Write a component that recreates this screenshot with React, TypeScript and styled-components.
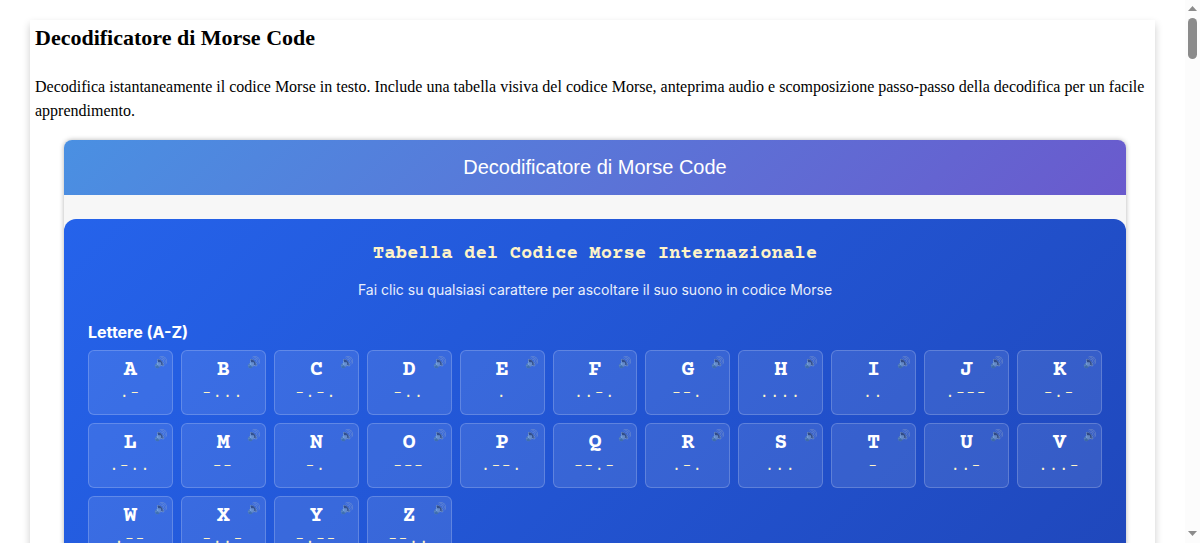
import React from 'react';
import styled, { createGlobalStyle } from 'styled-components';

const GlobalStyle = createGlobalStyle`
  *, *::before, *::after { box-sizing: border-box; }
  body {
    margin: 0;
    background: #fff;
    color: #000;
    font-family: "Liberation Serif", "Times New Roman", serif;
    font-size: 16px;
    line-height: 24px;
  }
  h1, h2, h3, p { margin: 0; }
`;

const Viewport = styled.div`
  display: flex;
  height: 100vh;
  overflow: hidden;
`;

const Page = styled.div`
  flex: 1;
  min-width: 0;
  padding: 20px 30px;
  overflow: hidden;
`;

const Article = styled.main`
  padding: 5px 0 24px 5px;
  background: #fff;
  box-shadow: 0 4px 8px rgba(0, 0, 0, 0.2);
`;

const PageTitle = styled.h1`
  font-size: 22px;
  line-height: 26px;
  margin-bottom: 24px;
`;

const Intro = styled.p`
  margin-bottom: 17px;
`;

const Tool = styled.section`
  margin: 0 29px;
  border-radius: 8px;
  background: #f7f7f7;
  box-shadow: 0 0 5px rgba(0, 0, 0, 0.3);
`;

const ToolHeader = styled.h2`
  padding: 15px;
  margin-bottom: 24px;
  border-radius: 8px 8px 0 0;
  background: linear-gradient(135deg, #4a90e2, #6a5acd);
  color: #fff;
  font: 400 20px/25px "Liberation Sans", Arial, sans-serif;
  text-align: center;
`;

const Chart = styled.div`
  min-height: 720px;
  padding: 24px;
  border-radius: 12px;
  background: linear-gradient(135deg, #2563eb 0%, #1e40af 100%);
  color: #fff;
  font-family: Inter, sans-serif;
`;

const ChartTitle = styled.h2`
  margin-bottom: 15px;
  color: #fef3c7;
  font: 700 19px/22px "Courier Prime", Courier, "Liberation Mono", monospace;
  text-align: center;
`;

const Hint = styled.p`
  margin-bottom: 20px;
  font-size: 14px;
  line-height: 20px;
  text-align: center;
  opacity: 0.9;
`;

const GroupTitle = styled.h3`
  margin-bottom: 6px;
  font-size: 16px;
  font-weight: 700;
  line-height: 24px;
`;

const Grid = styled.div`
  display: grid;
  grid-template-columns: repeat(auto-fill, minmax(80px, 1fr));
  gap: 8px;
`;

const Key = styled.button`
  position: relative;
  display: flex;
  flex-direction: column;
  align-items: center;
  height: 65px;
  padding: 8px;
  border: 1px solid rgba(255, 255, 255, 0.2);
  border-radius: 6px;
  background: rgba(255, 255, 255, 0.1);
  color: #fff;
  font-family: "Courier Prime", Courier, "Liberation Mono", monospace;
  cursor: pointer;
`;

const Letter = styled.span`
  font-size: 22px;
  font-weight: 700;
  line-height: 24px;
  margin-bottom: 3px;
`;

const Code = styled.span`
  color: #fef3c7;
  font-size: 14px;
  line-height: 16px;
  letter-spacing: 2px;
`;

const Speaker = styled.span`
  position: absolute;
  top: 4px;
  right: 4px;
  font-family: "Noto Color Emoji", sans-serif;
  font-size: 11px;
  line-height: 16px;
  opacity: 0.5;
`;

const ScrollTrack = styled.div`
  display: flex;
  flex-direction: column;
  align-items: center;
  justify-content: space-between;
  width: 15px;
  padding: 6px 0 7px;
  background: #fcfcfc;
`;

const ScrollTop = styled.div`
  display: flex;
  flex-direction: column;
  align-items: center;
  gap: 7px;
`;

const ScrollThumb = styled.div`
  width: 9px;
  height: 41px;
  border-radius: 5px;
  background: #8b8b8b;
`;

const Arrow = styled.svg`
  display: block;
  width: 9px;
  height: 5px;
  fill: #8b8b8b;
`;

const letters: [string, string][] = [
  ['A', '.-'], ['B', '-...'], ['C', '-.-.'], ['D', '-..'], ['E', '.'],
  ['F', '..-.'], ['G', '--.'], ['H', '....'], ['I', '..'], ['J', '.---'],
  ['K', '-.-'], ['L', '.-..'], ['M', '--'], ['N', '-.'], ['O', '---'],
  ['P', '.--.'], ['Q', '--.-'], ['R', '.-.'], ['S', '...'], ['T', '-'],
  ['U', '..-'], ['V', '...-'], ['W', '.--'], ['X', '-..-'], ['Y', '-.--'],
  ['Z', '--..'],
];

export default function App() {
  return (
    <>
      <GlobalStyle />
      <Viewport>
        <Page>
          <Article>
            <PageTitle>Decodificatore di Morse Code</PageTitle>
            <Intro>
              Decodifica istantaneamente il codice Morse in testo. Include una tabella visiva del
              codice Morse, anteprima audio e scomposizione passo-passo della decodifica per un
              facile apprendimento.
            </Intro>
            <Tool>
              <ToolHeader>Decodificatore di Morse Code</ToolHeader>
              <Chart>
                <ChartTitle>Tabella del Codice Morse Internazionale</ChartTitle>
                <Hint>Fai clic su qualsiasi carattere per ascoltare il suo suono in codice Morse</Hint>
                <GroupTitle>Lettere (A-Z)</GroupTitle>
                <Grid>
                  {letters.map(([letter, code]) => (
                    <Key key={letter} type="button">
                      <Letter>{letter}</Letter>
                      <Code>{code}</Code>
                      <Speaker aria-hidden="true">🔊</Speaker>
                    </Key>
                  ))}
                </Grid>
              </Chart>
            </Tool>
          </Article>
        </Page>
        <ScrollTrack aria-hidden="true">
          <ScrollTop>
            <Arrow viewBox="0 0 9 5"><path d="M0 5 4.5 0 9 5z" /></Arrow>
            <ScrollThumb />
          </ScrollTop>
          <Arrow viewBox="0 0 9 5"><path d="M0 0 4.5 5 9 0z" /></Arrow>
        </ScrollTrack>
      </Viewport>
    </>
  );
}
